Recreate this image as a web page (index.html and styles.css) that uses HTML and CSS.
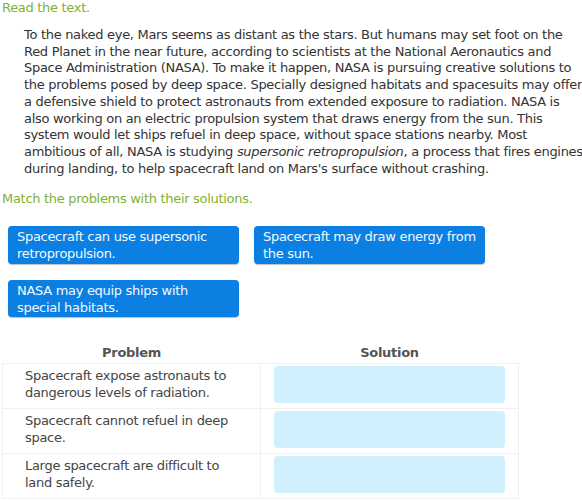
FILE: index.html
```html
<!DOCTYPE html>
<html>
<head>
<meta charset="utf-8">
<link rel="stylesheet" href="styles.css">
</head>
<body>
<div class="page">
  <div class="direction">Read the text.</div>
  <p class="passage">To the naked eye, Mars seems as distant as the stars. But humans may set foot on the<br>Red Planet in the near future, according to scientists at the National Aeronautics and<br>Space Administration (NASA). To make it happen, NASA is pursuing creative solutions to<br>the problems posed by deep space. Specially designed habitats and spacesuits may offer<br>a defensive shield to protect astronauts from extended exposure to radiation. NASA is<br>also working on an electric propulsion system that draws energy from the sun. This<br>system would let ships refuel in deep space, without space stations nearby. Most<br>ambitious of all, NASA is studying <em>supersonic retropropulsion</em>, a process that fires engines<br>during landing, to help spacecraft land on Mars's surface without crashing.</p>
  <div class="direction match">Match the problems with their solutions.</div>
  <div class="tiles">
    <div class="tile">Spacecraft can use supersonic retropropulsion.</div>
    <div class="tile">Spacecraft may draw energy from the sun.</div>
    <div class="tile">NASA may equip ships with special habitats.</div>
  </div>
  <table class="matcher">
    <thead>
      <tr><th>Problem</th><th>Solution</th></tr>
    </thead>
    <tbody>
      <tr><td class="prob">Spacecraft expose astronauts to dangerous levels of radiation.</td><td class="sol"><div class="slot"></div></td></tr>
      <tr><td class="prob">Spacecraft cannot refuel in deep space.</td><td class="sol"><div class="slot"></div></td></tr>
      <tr><td class="prob">Large spacecraft are difficult to land safely.</td><td class="sol"><div class="slot"></div></td></tr>
    </tbody>
  </table>
</div>
</body>
</html>
```
FILE: styles.css
```css
html, body {
  margin: 0;
  padding: 0;
  background: #fff;
  overflow: hidden;
}
body {
  font-family: "DejaVu Sans", Verdana, sans-serif;
  font-size: 13px;
  line-height: 16.75px;
  letter-spacing: -0.3px;
  color: #333;
}
.page {
  width: 582px;
}
.direction {
  color: #7fb134;
  padding-left: 2px;
}
.passage {
  margin: 10px 0 0 0;
  padding: 0 0 0 24px;
  white-space: nowrap;
}
.match {
  margin-top: 13px;
}
.tiles {
  display: grid;
  grid-template-columns: 231px 231px;
  column-gap: 15px;
  row-gap: 16px;
  padding-left: 8px;
  margin-top: 19px;
}
.tile {
  background: #0b80e2;
  color: #f2f8ff;
  border-radius: 4px;
  padding: 3px 9px 1px 9px;
  min-height: 33px;
  box-shadow: 0 1px 1px rgba(0,0,0,0.25);
}
.matcher {
  margin: 25px 0 0 2px;
  border-collapse: collapse;
  width: 517px;
  table-layout: fixed;
}
.matcher th {
  font-weight: bold;
  color: #555;
  text-align: center;
  padding: 0 0 2px 0;
  height: 19px;
  vertical-align: bottom;
}
.matcher td {
  border: 1px solid #f0f0f0;
  vertical-align: top;
  height: 45px;
  box-sizing: border-box;
}
.matcher td.prob {
  width: 258px;
  padding: 4px 20px 0 22px;
  color: #444;
}
.matcher td.sol {
  padding: 2px 13px 0 13px;
}
.slot {
  background: #d1f0fd;
  border-radius: 4px;
  height: 37px;
}
```
